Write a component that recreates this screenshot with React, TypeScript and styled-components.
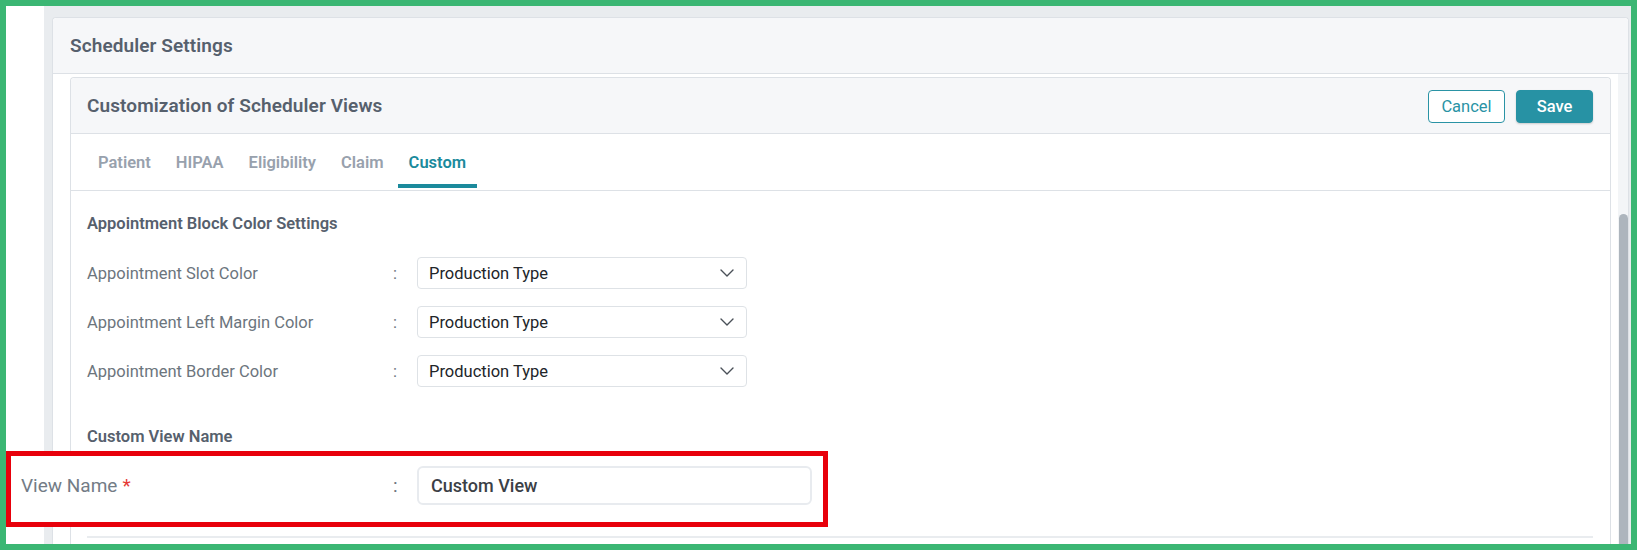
import React from "react";
import styled, { createGlobalStyle } from "styled-components";

const GlobalStyle = createGlobalStyle`
  html, body { margin: 0; padding: 0; background: #ffffff; }
  body { font-family: Roboto, "Liberation Sans", Arial, sans-serif; }
  * { box-sizing: border-box; }
`;

const Frame = styled.div`
  width: 1637px;
  height: 550px;
  border: 6px solid #3bb673;
  display: flex;
  overflow: hidden;
  background: #ffffff;
`;

const Rail = styled.aside`
  width: 38px;
  flex: none;
  background: #ffffff;
`;

const Main = styled.main`
  flex: 1;
  min-width: 0;
  display: flex;
  flex-direction: column;
  background: #e9ecef;
  padding: 11px 2px 0 8px;
`;

const Panel = styled.section`
  flex: 1;
  min-height: 0;
  display: flex;
  flex-direction: column;
  background: #ffffff;
  border: 1px solid #dde1e6;
  border-bottom: none;
  border-radius: 4px 4px 0 0;
`;

const PanelHeader = styled.header`
  height: 56px;
  flex: none;
  display: flex;
  align-items: center;
  padding: 0 17px;
  background: #f6f7f9;
  border-bottom: 1px solid #dde1e6;
  border-radius: 4px 4px 0 0;
`;

const Title = styled.h1`
  margin: 0;
  font-size: 19px;
  font-weight: 600;
  color: #56606d;
  letter-spacing: 0.1px;
`;

const PanelBody = styled.div`
  flex: 1;
  min-height: 0;
  display: flex;
  padding: 3px 0 0 17px;
`;

const InnerCard = styled.div`
  flex: 1;
  min-width: 0;
  display: flex;
  flex-direction: column;
  border: 1px solid #dde1e6;
  border-bottom: none;
  border-radius: 4px 4px 0 0;
  background: #ffffff;
`;

const InnerHeader = styled.div`
  height: 56px;
  flex: none;
  display: flex;
  align-items: center;
  justify-content: space-between;
  padding: 0 17px 0 16px;
  background: #f6f7f9;
  border-bottom: 1px solid #dde1e6;
  border-radius: 4px 4px 0 0;
`;

const Actions = styled.div`
  display: flex;
  gap: 11px;
  padding-top: 1px;
`;

const Button = styled.button<{ $primary?: boolean }>`
  width: 77px;
  height: 33px;
  border-radius: 4px;
  font-family: Roboto, "Liberation Sans", Arial, sans-serif;
  font-size: 16.5px;
  font-weight: ${(p) => (p.$primary ? 500 : 400)};
  cursor: pointer;
  border: 1px solid ${(p) => (p.$primary ? "#2792a4" : "#2a93a5")};
  background: ${(p) => (p.$primary ? "#2792a4" : "#ffffff")};
  color: ${(p) => (p.$primary ? "#ffffff" : "#2a93a5")};
  box-shadow: ${(p) => (p.$primary ? "0 1px 2px rgba(0,0,0,0.18)" : "none")};
`;

const TabList = styled.nav`
  height: 57px;
  flex: none;
  display: flex;
  align-items: flex-start;
  gap: 3px;
  padding-left: 16px;
  border-bottom: 1px solid #dde1e6;
`;

const Tab = styled.div<{ $active?: boolean }>`
  height: 54px;
  padding: 3px 11px 0;
  line-height: 51px;
  font-size: 16.5px;
  font-weight: 600;
  color: ${(p) => (p.$active ? "#1b8a9c" : "#98a1ad")};
  box-shadow: ${(p) => (p.$active ? "inset 0 -4px 0 #1b8a9c" : "none")};
`;

const Body = styled.div`
  display: flex;
  flex-direction: column;
  padding: 0 17px 0 16px;
`;

const SectionTitle = styled.h2<{ $top: number }>`
  margin: ${(p) => p.$top}px 0 0;
  font-size: 16.5px;
  line-height: 20px;
  font-weight: 600;
  color: #56606d;
`;

const Fields = styled.div`
  display: flex;
  flex-direction: column;
  gap: 17px;
  margin-top: 23px;
`;

const FieldRow = styled.div`
  display: grid;
  grid-template-columns: 306px 24px 330px;
  align-items: center;
  height: 32px;
`;

const Label = styled.span`
  font-size: 16.5px;
  color: #6c757d;
`;

const Colon = styled.span<{ $size?: number }>`
  font-size: ${(p) => p.$size ?? 16.5}px;
  color: #6c757d;
`;

const Select = styled.div`
  height: 32px;
  display: flex;
  align-items: center;
  justify-content: space-between;
  padding: 0 12px 0 11px;
  border: 1px solid #dee2e6;
  border-radius: 4px;
  font-size: 16.5px;
  color: #212529;
  background: #ffffff;
`;

const Highlight = styled.div`
  margin: 4px 0 0 -81px;
  width: 822px;
  height: 76px;
  border: 5px solid #e8000b;
  background: #ffffff;
  display: grid;
  grid-template-columns: 372px 24px 395px;
  align-items: center;
  padding: 0 0 7px 10px;
`;

const BigLabel = styled.span`
  font-size: 19px;
  color: #737c86;
`;

const Required = styled.span`
  color: #e53935;
  margin-left: 5px;
`;

const TextInput = styled.div`
  height: 39px;
  display: flex;
  align-items: center;
  padding: 0 12px;
  border: 2px solid #e8ebef;
  border-radius: 6px;
  font-size: 18px;
  font-weight: 500;
  color: #3b4046;
  background: #ffffff;
`;

const Divider = styled.div`
  margin-top: 9px;
  height: 2px;
  background: #e9ecef;
`;

const ScrollTrack = styled.div`
  width: 10px;
  flex: none;
  margin: -3px 0 0 7px;
  display: flex;
  flex-direction: column;
  background: #f3f5f7;
`;

const ScrollThumb = styled.div`
  flex: 1;
  margin: 140px 0 0 1px;
  border-radius: 5px 5px 0 0;
  background: #adb5bd;
`;

const Chevron = () => (
  <svg width="14" height="8" viewBox="0 0 14 8" fill="none">
    <polyline points="1,1 7,7 13,1" stroke="#4a5058" strokeWidth="1.4" strokeLinecap="round" strokeLinejoin="round" />
  </svg>
);

const colorFields = [
  "Appointment Slot Color",
  "Appointment Left Margin Color",
  "Appointment Border Color",
];

const tabs = ["Patient", "HIPAA", "Eligibility", "Claim", "Custom"];

export default function App() {
  return (
    <>
      <GlobalStyle />
      <Frame>
        <Rail />
        <Main>
          <Panel>
            <PanelHeader>
              <Title>Scheduler Settings</Title>
            </PanelHeader>
            <PanelBody>
              <InnerCard>
                <InnerHeader>
                  <Title>Customization of Scheduler Views</Title>
                  <Actions>
                    <Button>Cancel</Button>
                    <Button $primary>Save</Button>
                  </Actions>
                </InnerHeader>
                <TabList>
                  {tabs.map((t) => (
                    <Tab key={t} $active={t === "Custom"}>
                      {t}
                    </Tab>
                  ))}
                </TabList>
                <Body>
                  <SectionTitle $top={23}>Appointment Block Color Settings</SectionTitle>
                  <Fields>
                    {colorFields.map((f) => (
                      <FieldRow key={f}>
                        <Label>{f}</Label>
                        <Colon>:</Colon>
                        <Select>
                          <span>Production Type</span>
                          <Chevron />
                        </Select>
                      </FieldRow>
                    ))}
                  </Fields>
                  <SectionTitle $top={40}>Custom View Name</SectionTitle>
                  <Highlight>
                    <BigLabel>
                      View Name<Required>*</Required>
                    </BigLabel>
                    <Colon $size={19}>:</Colon>
                    <TextInput>Custom View</TextInput>
                  </Highlight>
                  <Divider />
                </Body>
              </InnerCard>
              <ScrollTrack>
                <ScrollThumb />
              </ScrollTrack>
            </PanelBody>
          </Panel>
        </Main>
      </Frame>
    </>
  );
}
